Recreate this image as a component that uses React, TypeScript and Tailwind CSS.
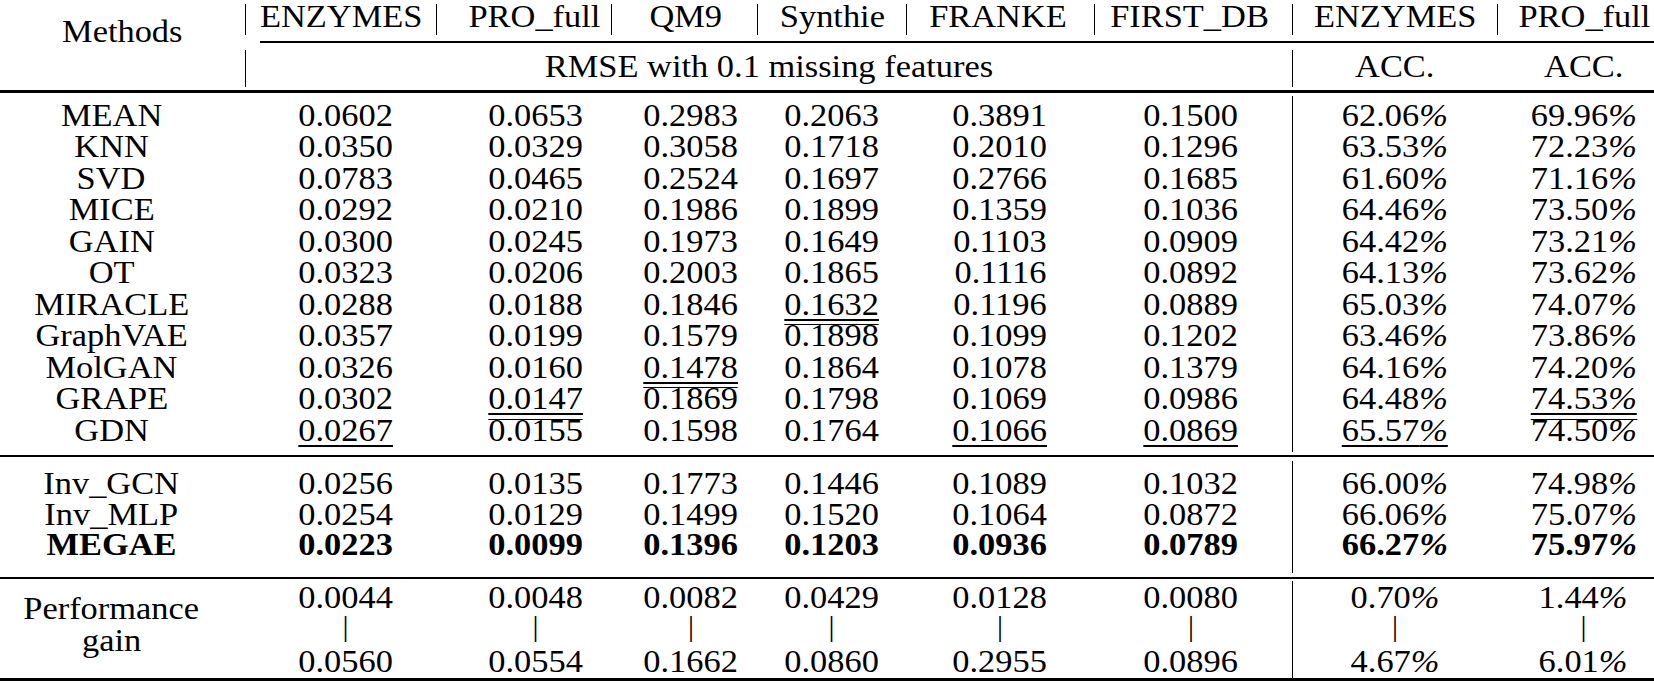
const group1 = [
  ["MEAN", "0.0602", "0.0653", "0.2983", "0.2063", "0.3891", "0.1500", "62.06%", "69.96%"],
  ["KNN", "0.0350", "0.0329", "0.3058", "0.1718", "0.2010", "0.1296", "63.53%", "72.23%"],
  ["SVD", "0.0783", "0.0465", "0.2524", "0.1697", "0.2766", "0.1685", "61.60%", "71.16%"],
  ["MICE", "0.0292", "0.0210", "0.1986", "0.1899", "0.1359", "0.1036", "64.46%", "73.50%"],
  ["GAIN", "0.0300", "0.0245", "0.1973", "0.1649", "0.1103", "0.0909", "64.42%", "73.21%"],
  ["OT", "0.0323", "0.0206", "0.2003", "0.1865", "0.1116", "0.0892", "64.13%", "73.62%"],
  ["MIRACLE", "0.0288", "0.0188", "0.1846", "0.1632", "0.1196", "0.0889", "65.03%", "74.07%"],
  ["GraphVAE", "0.0357", "0.0199", "0.1579", "0.1898", "0.1099", "0.1202", "63.46%", "73.86%"],
  ["MolGAN", "0.0326", "0.0160", "0.1478", "0.1864", "0.1078", "0.1379", "64.16%", "74.20%"],
  ["GRAPE", "0.0302", "0.0147", "0.1869", "0.1798", "0.1069", "0.0986", "64.48%", "74.53%"],
  ["GDN", "0.0267", "0.0155", "0.1598", "0.1764", "0.1066", "0.0869", "65.57%", "74.50%"],
];

// second best is underlined; a few cells below them carry the double rule
const underlined = ["10-1", "9-2", "8-3", "6-4", "10-5", "10-6", "10-7", "9-8"];
const overlined = ["10-2", "9-3", "7-4", "10-8"];

const group2 = [
  ["Inv_GCN", "0.0256", "0.0135", "0.1773", "0.1446", "0.1089", "0.1032", "66.00%", "74.98%"],
  ["Inv_MLP", "0.0254", "0.0129", "0.1499", "0.1520", "0.1064", "0.0872", "66.06%", "75.07%"],
  ["MEGAE", "0.0223", "0.0099", "0.1396", "0.1203", "0.0936", "0.0789", "66.27%", "75.97%"],
];

const gains = [
  ["0.0044", "0.0560"],
  ["0.0048", "0.0554"],
  ["0.0082", "0.1662"],
  ["0.0429", "0.0860"],
  ["0.0128", "0.2955"],
  ["0.0080", "0.0896"],
  ["0.70%", "4.67%"],
  ["1.44%", "6.01%"],
];

const grid9 =
  "grid grid-cols-[245px_191px_175px_146px_149px_188px_198px_205px_157px]";
const grid8 = "grid grid-cols-[191px_175px_146px_149px_188px_198px_205px_157px]";

const bodyOff = ["pr-[22px]", "pl-[10px]", "pl-[24px]", "pl-[14px]", "", "", "pr-[4px]", "", "pl-[16px]"];
const headOff = ["", "pl-[20px]", "pl-[2px]", "", "pr-[4px]", "pr-[8px]", "", "pl-[16px]"];

// the source picture is stretched sideways: glyphs are wider than Times at this height
function T({ children }: { children: React.ReactNode }) {
  return <span className="inline-block scale-x-[1.11] whitespace-nowrap">{children}</span>;
}

function Val({ v }: { v: string }) {
  if (v.endsWith("%")) {
    return (
      <>
        {v.slice(0, -1)}
        <i>%</i>
      </>
    );
  }
  return <>{v}</>;
}

function Cell({ v, u, o }: { v: string; u?: boolean; o?: boolean }) {
  if (u) {
    return (
      <span className="underline decoration-[1.5px] underline-offset-[4px]">
        <Val v={v} />
      </span>
    );
  }
  if (o) {
    return (
      <span className="inline-block leading-[22px] border-t-[1.5px] border-black">
        <Val v={v} />
      </span>
    );
  }
  return <Val v={v} />;
}

function Group({
  rows,
  pitch,
  colPad,
  bold,
}: {
  rows: string[][];
  pitch: string;
  colPad: string;
  bold?: number;
}) {
  return (
    <div className={grid9}>
      {Array.from({ length: 9 }).map((_, c) => (
        <div
          key={c}
          className={`flex flex-col items-center ${colPad} ${bodyOff[c]} ${
            c === 7 ? "border-l-[1.5px] border-black" : ""
          }`}
        >
          {rows.map((r, i) => (
            <div key={i} className={`${pitch} ${bold === i ? "font-bold" : ""}`}>
              <T>
                <Cell
                  v={r[c]}
                  u={rows.length > 3 && underlined.includes(`${i}-${c}`)}
                  o={rows.length > 3 && overlined.includes(`${i}-${c}`)}
                />
              </T>
            </div>
          ))}
        </div>
      ))}
    </div>
  );
}

export default function App() {
  return (
    <div className="w-[1654px] h-[683px] bg-white text-black font-['Liberation_Serif',serif] text-[31px] overflow-hidden">
      {/* header */}
      <div className="flex">
        <div className="w-[245px] h-[90px] flex items-center justify-center pb-[26px] leading-[26px]">
          <T>Methods</T>
        </div>
        <div className="flex-1 flex flex-col">
          <div className={`${grid8} pt-[4px]`}>
            {["ENZYMES", "PRO_full", "QM9", "Synthie", "FRANKE", "FIRST_DB", "ENZYMES", "PRO_full"].map(
              (h, i) => (
                <div
                  key={i}
                  className={`h-[31px] border-l-[1.5px] border-black flex justify-center leading-[26px] ${headOff[i]}`}
                >
                  <T>{h}</T>
                </div>
              )
            )}
          </div>
          <div className="mt-[6px] ml-[15px] h-[1.5px] bg-black" />
          <div className={`${grid8} mt-[7px]`}>
            <div className="col-span-6 h-[37px] border-l-[1.5px] border-black flex justify-center pt-[4px] leading-[26px]">
              <T>RMSE with 0.1 missing features</T>
            </div>
            <div className="h-[37px] border-l-[1.5px] border-black flex justify-center pt-[4px] leading-[26px]">
              <T>ACC.</T>
            </div>
            <div className="h-[37px] flex justify-center pt-[4px] pl-[16px] leading-[26px]">
              <T>ACC.</T>
            </div>
          </div>
        </div>
      </div>
      <div className="h-[2.5px] bg-black" />

      {/* baselines */}
      <div className="py-[3px]">
        <Group rows={group1} pitch="h-[31.5px] leading-[31.5px]" colPad="pt-[4px] pb-[6px]" />
      </div>
      <div className="h-[2px] bg-black" />

      {/* ours */}
      <div className="pt-[4px] pb-[4px]">
        <Group
          rows={group2}
          pitch="h-[30.5px] leading-[30.5px]"
          colPad="pt-[8px] pb-[12px]"
          bold={2}
        />
      </div>
      <div className="h-[2px] bg-black" />

      {/* gain */}
      <div className={`${grid9} pt-[2px]`}>
        <div className="flex flex-col items-center justify-center pr-[22px] pb-[8px] leading-[32px]">
          <T>Performance</T>
          <T>gain</T>
        </div>
        {gains.map((g, i) => (
          <div
            key={i}
            className={`flex flex-col items-center pt-[1px] ${bodyOff[i + 1]} ${
              i === 6 ? "border-l-[1.5px] border-black" : ""
            }`}
          >
            <div className="h-[32px] leading-[32px]">
              <T>
                <Val v={g[0]} />
              </T>
            </div>
            <div className="h-[32px] flex items-center">
              <span className="leading-none text-[30px] -translate-y-[4px]">|</span>
            </div>
            <div className="h-[32px] leading-[32px]">
              <T>
                <Val v={g[1]} />
              </T>
            </div>
          </div>
        ))}
      </div>
      <div className="h-[3px] bg-black" />
    </div>
  );
}
